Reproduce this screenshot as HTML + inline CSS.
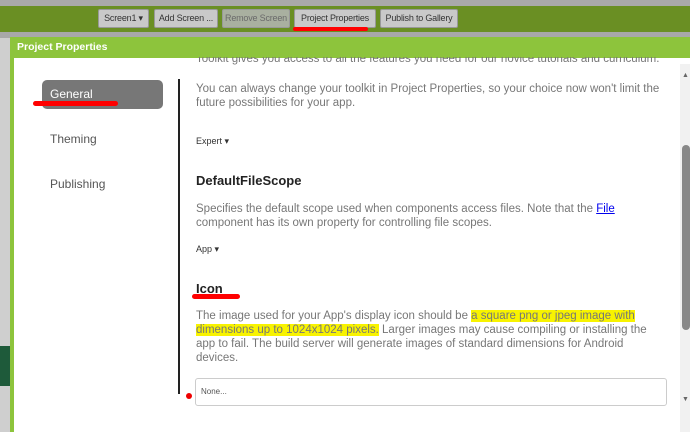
<!DOCTYPE html>
<html><head><meta charset="utf-8"><style>
*{margin:0;padding:0;box-sizing:border-box}
body{width:690px;height:432px;overflow:hidden;background:#c8c8c8;font-family:"Liberation Sans",sans-serif;position:relative}
.top{position:absolute;left:0;top:0;width:690px;height:6px;background:#a9a9a9}
.bar{position:absolute;left:0;top:6px;width:690px;height:26px;background:#6a8f23}
.btn{position:absolute;top:9px;height:19px;background:#c9c9c9;border:1px solid #999;border-radius:2px;font-size:9px;line-height:17px;color:#333;white-space:nowrap;text-align:center;overflow:hidden;letter-spacing:-0.2px}
.gray2{position:absolute;left:0;top:32px;width:690px;height:6px;background:#a8a8a8}
.hdr{position:absolute;left:10px;top:37px;width:680px;height:21px;background:#8dc43c;color:#fff;font-weight:bold;font-size:10.5px;line-height:21px;padding-left:7px}
.left{position:absolute;left:0;top:38px;width:10px;height:394px;background:#cfcfcf}
.body{position:absolute;left:10px;top:58px;width:680px;height:374px;background:#fff;border-left:4px solid #8dc43c}
.red{position:absolute;background:#f00;border-radius:3px}
.nav{position:absolute;left:50px;font-size:12px;color:#555}
.txt{position:absolute;left:196px;font-size:11.5px;color:#777;line-height:14px}
.h{position:absolute;left:196px;font-size:13px;font-weight:bold;color:#222}
.hl{background:#f8f300}
</style></head><body>
<div class="top"></div><div class="bar"></div>
<div class="btn" style="left:98px;width:51px">Screen1 ▾</div>
<div class="btn" style="left:154px;width:64px">Add Screen ...</div>
<div class="btn" style="left:222px;width:68px;color:#6a6a6a;background:#a9b0a0">Remove Screen</div>
<div class="btn" style="left:294px;width:82px">Project Properties</div>
<div class="btn" style="left:380px;width:78px">Publish to Gallery</div>
<div class="red" style="left:293px;top:27px;width:75px;height:4px"></div>
<div class="gray2"></div>
<div class="left"></div>
<div style="position:absolute;left:0;top:346px;width:10px;height:40px;background:#1e5a3a"></div>
<div class="hdr">Project Properties</div>
<div class="body"></div>
<div style="position:absolute;left:42px;top:80px;width:121px;height:29px;background:#777;border-radius:5px;color:#fff;font-size:12px;line-height:29px;padding-left:8px">General</div>
<div class="red" style="left:33px;top:101px;width:85px;height:5px"></div>
<div class="nav" style="top:132px">Theming</div>
<div class="nav" style="top:177px">Publishing</div>
<div style="position:absolute;left:178px;top:79px;width:2px;height:315px;background:#222"></div>
<div class="txt" style="top:57px;height:12px;overflow:hidden"><div style="margin-top:-5px">Toolkit gives you access to all the features you need for our novice tutorials and curriculum.</div></div>
<div class="txt" style="top:82px">You can always change your toolkit in Project Properties, so your choice now won't limit the<br>future possibilities for your app.</div>
<div class="txt" style="top:134px;font-size:9px;color:#333">Expert ▾</div>
<div class="h" style="top:173px">DefaultFileScope</div>
<div class="txt" style="top:202px">Specifies the default scope used when components access files. Note that the <span style="color:#00e;text-decoration:underline">File</span><br>component has its own property for controlling file scopes.</div>
<div class="txt" style="top:242px;font-size:9px;color:#333">App ▾</div>
<div class="h" style="top:281px">Icon</div>
<div class="red" style="left:192px;top:294px;width:48px;height:5px"></div>
<div class="txt" style="top:309px">The image used for your App's display icon should be <span class="hl">a square png or jpeg image with</span><br><span class="hl">dimensions up to 1024x1024 pixels.</span> Larger images may cause compiling or installing the<br>app to fail. The build server will generate images of standard dimensions for Android<br>devices.</div>
<div style="position:absolute;left:195px;top:378px;width:472px;height:28px;border:1px solid #ccc;border-radius:3px;font-size:8px;color:#555;line-height:26px;padding-left:5px">None...</div>
<div style="position:absolute;left:186px;top:393px;width:6px;height:6px;border-radius:3px;background:#e00"></div>
<div style="position:absolute;left:680px;top:64px;width:10px;height:368px;background:#f1f1f1"></div>
<div style="position:absolute;left:682px;top:145px;width:8px;height:185px;background:#888;border-radius:4px"></div>
<div style="position:absolute;left:682px;top:72px;font-size:7px;color:#666">▲</div>
<div style="position:absolute;left:682px;top:396px;font-size:7px;color:#666">▼</div>
</body></html>
